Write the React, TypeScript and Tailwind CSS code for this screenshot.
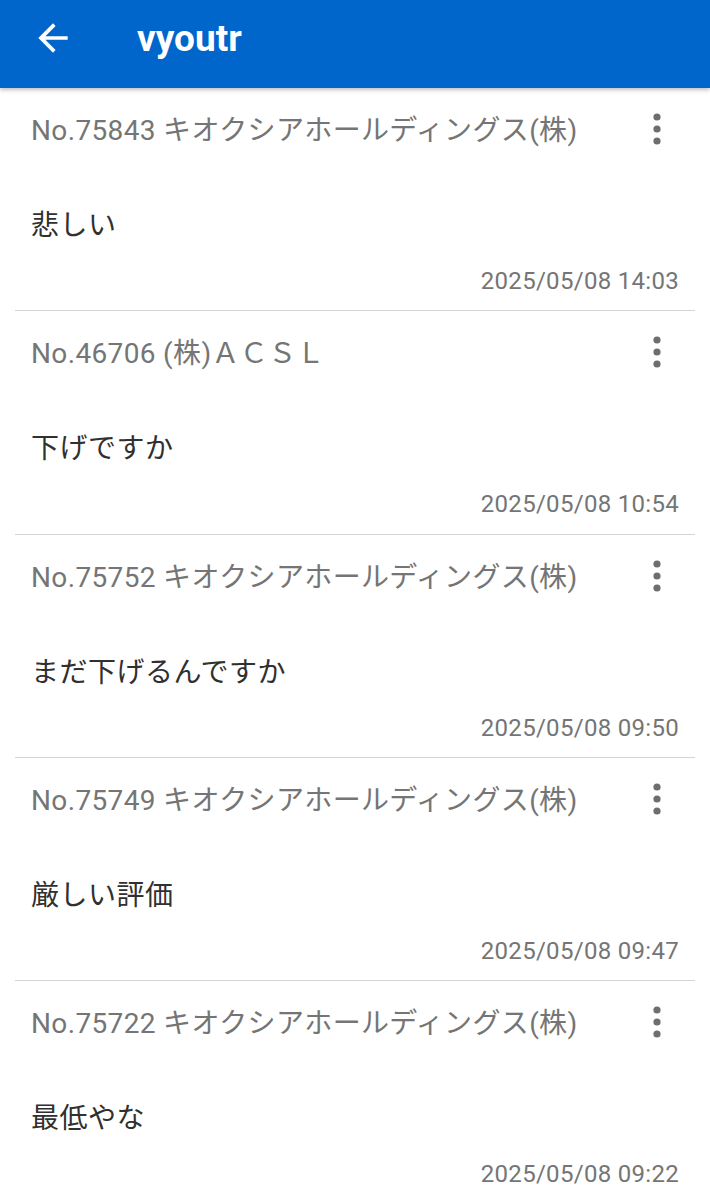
import React from "react";

const items = [
  { title: "No.75843 キオクシアホールディングス(株)", body: "悲しい", date: "2025/05/08 14:03" },
  { title: "No.46706 (株)ＡＣＳＬ", body: "下げですか", date: "2025/05/08 10:54" },
  { title: "No.75752 キオクシアホールディングス(株)", body: "まだ下げるんですか", date: "2025/05/08 09:50" },
  { title: "No.75749 キオクシアホールディングス(株)", body: "厳しい評価", date: "2025/05/08 09:47" },
  { title: "No.75722 キオクシアホールディングス(株)", body: "最低やな", date: "2025/05/08 09:22" },
];

const font = { fontFamily: 'Roboto, "Noto Sans CJK JP", sans-serif' };

export default function App() {
  return (
    <div className="w-[710px] h-[1200px] overflow-hidden bg-white" style={font}>
      <div className="relative z-10 h-[88px] bg-[#0066cc] flex items-center shadow-[0_2px_4px_rgba(0,0,0,0.25)]">
        <svg className="ml-[31px] -mt-[12px]" width="44" height="44" viewBox="0 0 24 24" fill="#ffffff">
          <path d="M20 11H7.83l5.59-5.59L12 4l-8 8 8 8 1.41-1.41L7.83 13H20v-2z" />
        </svg>
        <div className="ml-[62px] text-white font-bold text-[37px] leading-none -mt-[12px]">vyoutr</div>
      </div>
      <div className="mx-[15px]">
        {items.map((it, i) => (
          <div key={i} className="h-[223.3px] border-b border-[#d4d4d4] px-[16px] flex flex-col">
            <div className="h-[86px] flex items-center justify-between">
              <div className="text-[28px] text-[#757575] leading-none whitespace-nowrap tracking-[0.35px]">{it.title}</div>
              <svg className="-mr-[2px] -mt-[4px]" width="48" height="48" viewBox="0 0 24 24" fill="#6e6e6e">
                <circle cx="12" cy="6" r="1.8" />
                <circle cx="12" cy="12" r="1.8" />
                <circle cx="12" cy="18" r="1.8" />
              </svg>
            </div>
            <div className="mt-[32px] h-[40px] flex items-center text-[28px] text-[#303030] font-normal leading-none tracking-[0.5px]">{it.body}</div>
            <div className="mt-[19px] h-[32px] flex items-center justify-end text-[24px] text-[#757575] leading-none tracking-[0.3px]">{it.date}</div>
          </div>
        ))}
      </div>
    </div>
  );
}
